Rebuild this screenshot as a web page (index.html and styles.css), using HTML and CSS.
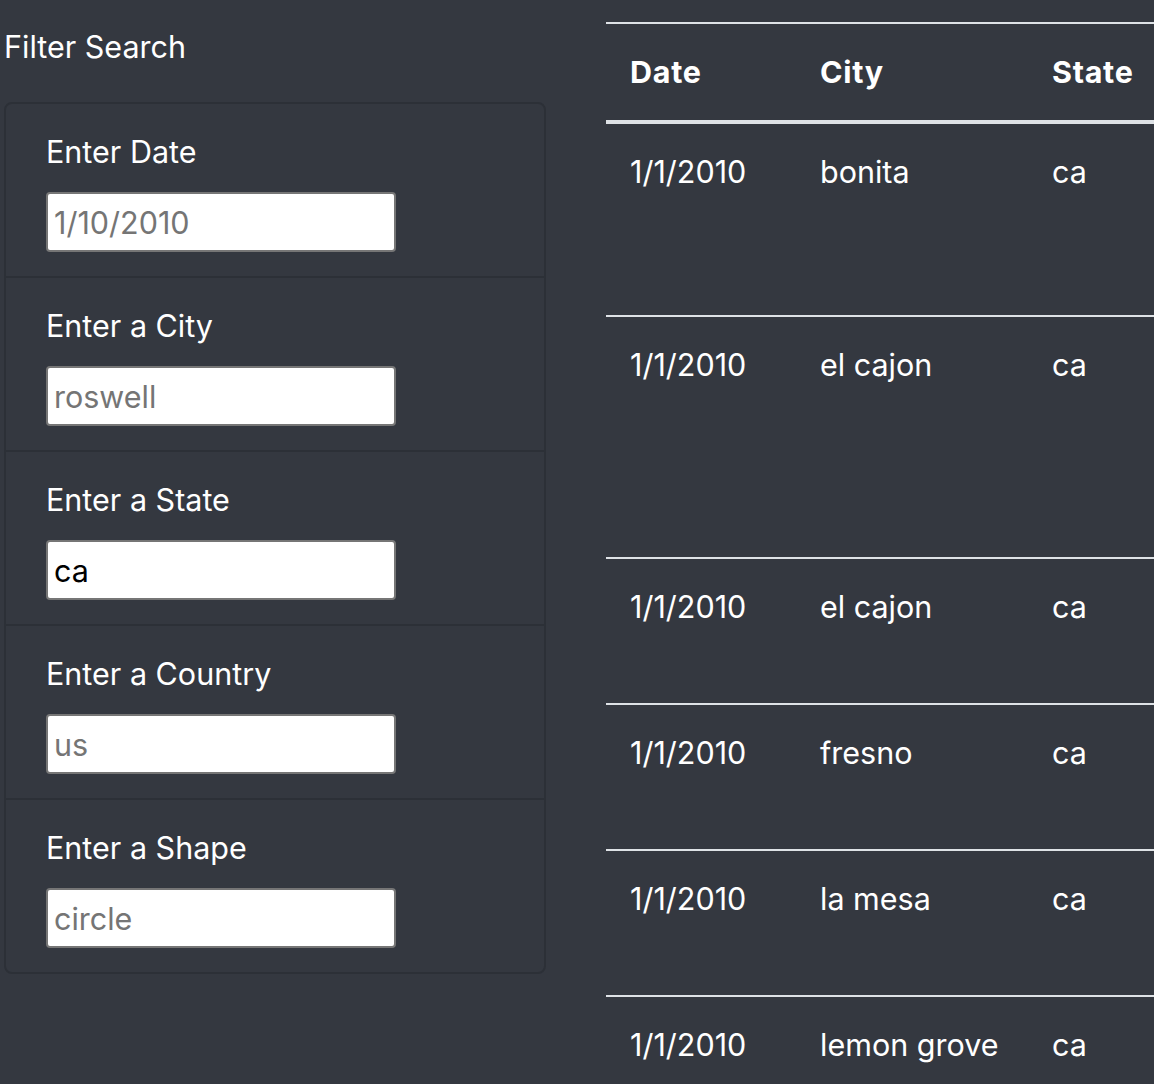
FILE: index.html
```html
<!DOCTYPE html>
<html lang="en">
<head>
<meta charset="utf-8">
<title>UFO Sightings</title>
<link rel="stylesheet" href="styles.css">
</head>
<body>
<div class="page">
  <aside class="filters">
    <h5 class="filters-title">Filter Search</h5>
    <ul class="filter-list">
      <li class="filter-item">
        <label class="filter-label" for="datetime">Enter Date</label>
        <input class="filter-input" id="datetime" type="text" placeholder="1/10/2010">
      </li>
      <li class="filter-item">
        <label class="filter-label" for="city">Enter a City</label>
        <input class="filter-input" id="city" type="text" placeholder="roswell">
      </li>
      <li class="filter-item">
        <label class="filter-label" for="state">Enter a State</label>
        <input class="filter-input" id="state" type="text" placeholder="ca" value="ca">
      </li>
      <li class="filter-item">
        <label class="filter-label" for="country">Enter a Country</label>
        <input class="filter-input" id="country" type="text" placeholder="us">
      </li>
      <li class="filter-item">
        <label class="filter-label" for="shape">Enter a Shape</label>
        <input class="filter-input" id="shape" type="text" placeholder="circle">
      </li>
    </ul>
  </aside>
  <main class="results">
    <table class="ufo-table">
      <colgroup>
        <col class="col-date">
        <col class="col-city">
        <col class="col-state">
      </colgroup>
      <thead>
        <tr>
          <th>Date</th>
          <th>City</th>
          <th>State</th>
        </tr>
      </thead>
      <tbody>
        <tr class="lines-3"><td>1/1/2010</td><td>bonita</td><td>ca</td></tr>
        <tr class="lines-4"><td>1/1/2010</td><td>el cajon</td><td>ca</td></tr>
        <tr class="lines-2"><td>1/1/2010</td><td>el cajon</td><td>ca</td></tr>
        <tr class="lines-2"><td>1/1/2010</td><td>fresno</td><td>ca</td></tr>
        <tr class="lines-2"><td>1/1/2010</td><td>la mesa</td><td>ca</td></tr>
        <tr class="lines-2"><td>1/1/2010</td><td>lemon grove</td><td>ca</td></tr>
      </tbody>
    </table>
  </main>
</div>
</body>
</html>
```
FILE: styles.css
```css
html, body {
  margin: 0;
  padding: 0;
  height: 100%;
  overflow: hidden;
  background: #343840;
}

body {
  font-family: Inter, "Noto Sans", "Liberation Sans", sans-serif;
  font-size: 30.5px;
  line-height: 48px;
  color: #ffffff;
}

.page {
  display: flex;
  align-items: flex-start;
  padding: 22px 0 0 4px;
  gap: 60px;
}

.filters {
  flex: 0 0 542px;
  width: 542px;
  padding-top: 1px;
}

.filters-title {
  margin: 0 0 31px 0;
  font-size: 30.5px;
  line-height: 48px;
  font-weight: 400;
}

.filter-list {
  list-style: none;
  margin: 0;
  padding: 0;
  border: 2px solid #2c3037;
  border-radius: 8px;
}

.filter-item {
  padding: 24px 40px 24px 40px;
  border-top: 2px solid #2c3037;
}

.filter-item:first-child {
  border-top: none;
}

.filter-label {
  display: block;
  margin-bottom: 16px;
  line-height: 48px;
}

.filter-input {
  display: block;
  box-sizing: border-box;
  width: 350px;
  height: 60px;
  margin: 0;
  padding: 0 6px;
  border: 2px solid #767676;
  border-radius: 4px;
  background: #ffffff;
  color: #000000;
  font-family: inherit;
  font-size: 30.5px;
}

.filter-input::placeholder {
  color: #757575;
  opacity: 1;
}

.results {
  flex: 1 1 auto;
  min-width: 0;
  overflow: hidden;
}

.ufo-table {
  table-layout: fixed;
  width: 1200px;
  border-collapse: collapse;
}

.col-date { width: 190px; }
.col-city { width: 232px; }

.ufo-table th,
.ufo-table td {
  padding: 24px;
  text-align: left;
  vertical-align: top;
  white-space: nowrap;
  border-top: 2px solid #dee2e6;
}

.ufo-table th {
  font-weight: 700;
  letter-spacing: 0.7px;
  vertical-align: bottom;
  border-bottom: 4px solid #dee2e6;
}

.lines-2 { height: 146px; }
.lines-3 { height: 194px; }
.lines-4 { height: 242px; }
```
